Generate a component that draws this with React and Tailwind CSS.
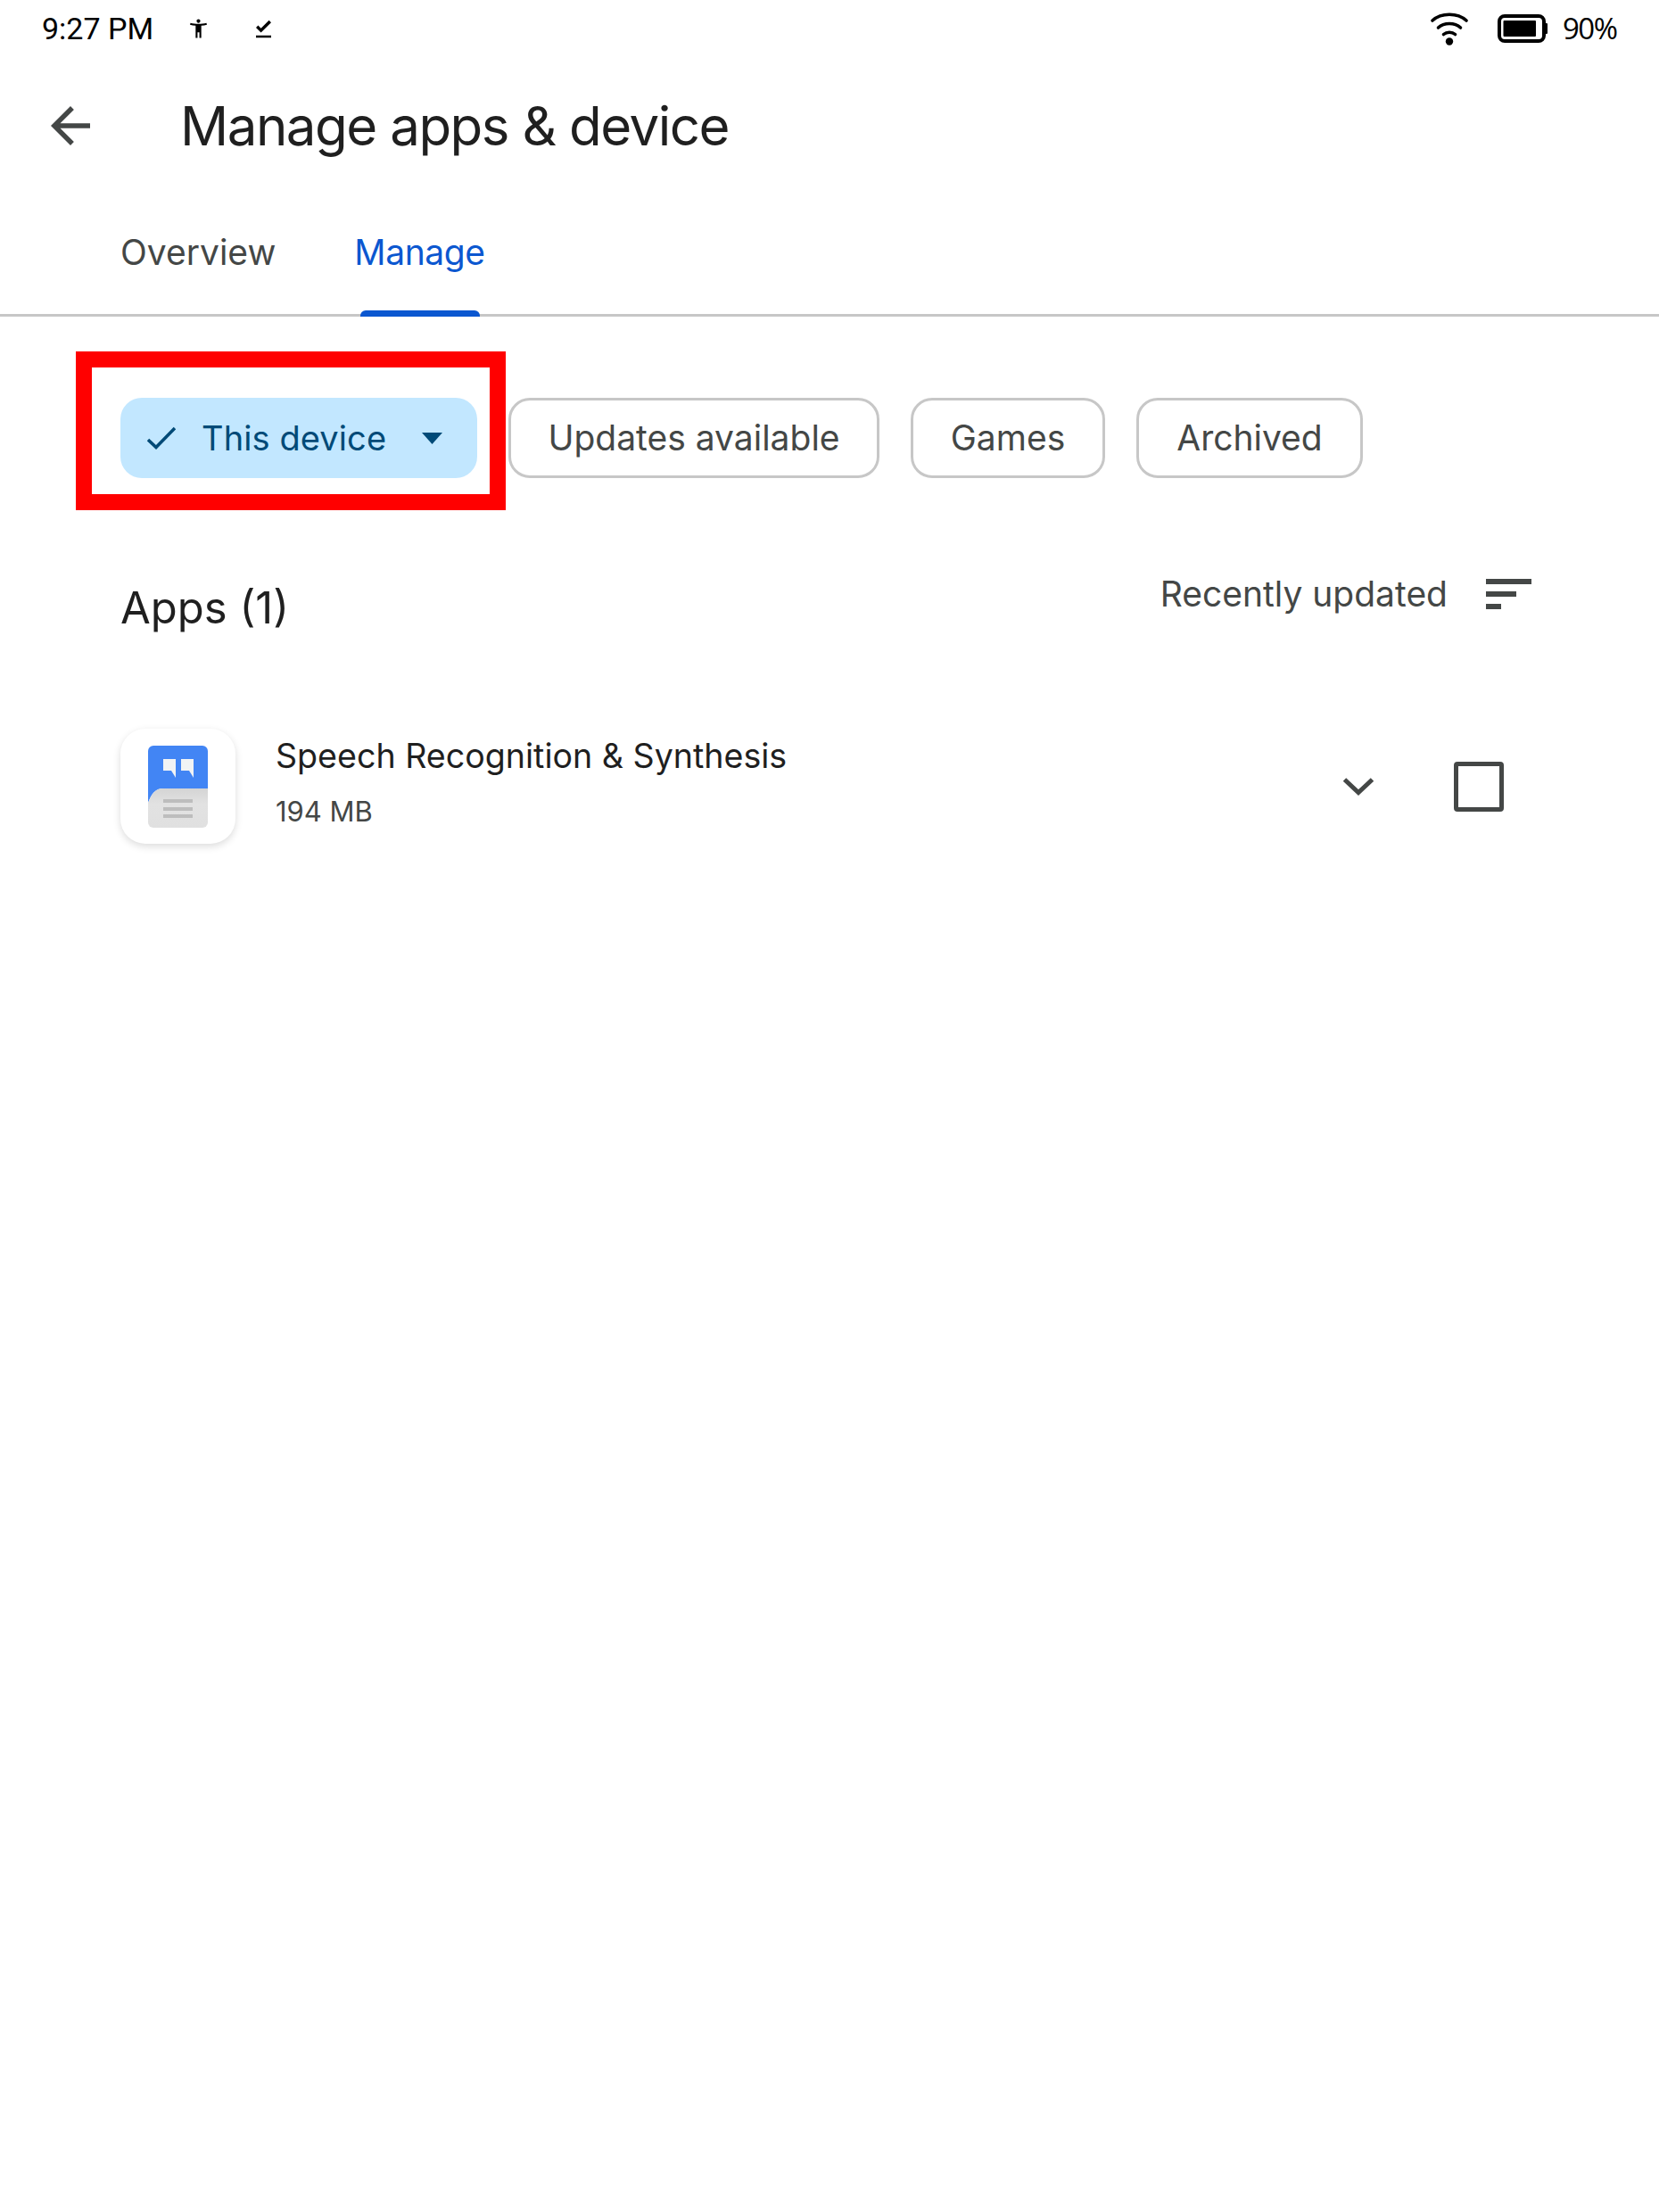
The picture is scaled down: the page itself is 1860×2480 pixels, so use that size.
export default function App() {
  const chip = "flex h-[90px] items-center justify-center rounded-[24px] border-[3px] border-[#c7c7c7] text-[#444746] text-[39px]";
  return (
    <div className="w-[1860px] h-[2480px] overflow-hidden bg-white [font-family:Inter,sans-serif] text-[#1f1f1f]">
      {/* status bar */}
      <div className="flex h-[64px] items-center pl-[47px] pr-[47px] text-black">
        <span className="w-[125px] whitespace-nowrap text-[34px] [font-family:Roboto,sans-serif]">9:27 PM</span>
        <svg viewBox="3 2 18 20" className="ml-[41px] h-[22px] w-[19px] fill-black">
          <path d="M20.5 6c-2.61.7-5.67 1-8.5 1s-5.89-.3-8.5-1L3 8c1.86.5 4 .83 6 1v13h2v-6h2v6h2V9c2-.17 4.14-.5 6-1l-.5-2zM12 6c1.1 0 2-.9 2-2s-.9-2-2-2-2 .9-2 2 .9 2 2 2z" />
        </svg>
        <svg viewBox="5 4 14 16" className="ml-[55px] h-[23px] w-[17px] fill-black">
          <path d="M5 18h14v2H5v-2zm4.6-2.7L5 10.7l2-1.9 2.6 2.6L17 4l2 2-9.4 9.3z" />
        </svg>
        <svg viewBox="0 0 42 38" className="ml-auto h-[38px] w-[42px]" fill="none" stroke="black" strokeWidth="3.6" strokeLinecap="round">
          <path d="M2 10C12 1 30 1 40 10" />
          <path d="M8.5 18C15 12 27 12 33.5 18" />
          <path d="M14.5 25.5C18 22.5 24 22.5 27.5 25.5" />
          <circle cx="21" cy="33.5" r="4.2" fill="black" stroke="none" />
        </svg>
        <svg viewBox="0 0 56 32" className="ml-[33px] h-[32px] w-[56px]">
          <rect x="2" y="2" width="50" height="28" rx="6" fill="none" stroke="black" strokeWidth="4" />
          <rect x="6.5" y="7" width="36.5" height="18" rx="1" fill="black" />
          <rect x="52" y="10" width="4" height="12" rx="1" fill="black" />
        </svg>
        <span className="ml-[17px] w-[61px] whitespace-nowrap text-[33px] [font-family:'Open_Sans',sans-serif] tracking-[-1.5px]">90%</span>
      </div>

      {/* header */}
      <div className="flex h-[154px] items-center pl-[57px]">
        <svg viewBox="4 4 16 16" className="h-[44px] w-[44px] fill-[#444746]">
          <path d="M20 11H7.83l5.59-5.59L12 4l-8 8 8 8 1.41-1.41L7.83 13H20v-2z" />
        </svg>
        <h1 className="ml-[101px] whitespace-nowrap text-[60px] font-normal tracking-[-1.5px]">Manage apps &amp; device</h1>
      </div>

      {/* tabs */}
      <div className="mt-[2px] flex h-[135px] gap-[92px] border-b-[3px] border-[#c7c7c7] pl-[135px]">
        <div className="flex h-[132px] w-[172px] items-start pt-[40px] text-[39px] leading-[46px] text-[#444746] whitespace-nowrap">Overview</div>
        <div className="flex h-[135px] w-[143px] flex-col items-center justify-between pt-[40px] text-[39px] leading-[46px] tracking-[-0.4px] text-[#0b57d0] whitespace-nowrap">
          <span>Manage</span>
          <div className="h-[7px] w-[134px] rounded-t-[6px] bg-[#0b57d0]" />
        </div>
      </div>

      {/* filter chips */}
      <div className="flex gap-[35px] pl-[135px] pt-[91px]">
        <div className="relative flex h-[90px] w-[400px] items-center rounded-[24px] bg-[#c2e7ff] pl-[30px] text-[38px] tracking-[0.1px] text-[#004a77]">
          <svg viewBox="0 0 32 26" className="h-[26px] w-[32px]" fill="none" stroke="#004a77" strokeWidth="3.6">
            <path d="M1 15L10 23.5L31 2" />
          </svg>
          <span className="ml-[29px] whitespace-nowrap">This device</span>
          <svg viewBox="0 0 23 13" className="absolute left-[338px] top-[39px] h-[13px] w-[23px] fill-[#004a77]">
            <path d="M0 0H23L11.5 13Z" />
          </svg>
          <div className="pointer-events-none absolute left-[-50px] right-[-32px] top-[-52px] bottom-[-36px] border-[18px] border-[#ff0000]" />
        </div>
        <div className={`${chip} w-[416px]`}>Updates available</div>
        <div className={`${chip} w-[218px]`}>Games</div>
        <div className={`${chip} w-[254px]`}>Archived</div>
      </div>

      {/* section header */}
      <div className="mt-[94px] flex items-start justify-between pl-[135px] pr-[143px]">
        <h2 className="text-[49px] font-normal leading-[104px] whitespace-nowrap">Apps (1)</h2>
        <div className="flex h-[72px] items-center gap-[43px] text-[39px] text-[#444746]">
          <span className="whitespace-nowrap">Recently updated</span>
          <div className="flex w-[51px] flex-col gap-[8px]">
            <div className="h-[6px] w-[51px] bg-[#444746]" />
            <div className="h-[6px] w-[34px] bg-[#444746]" />
            <div className="h-[6px] w-[17px] bg-[#444746]" />
          </div>
        </div>
      </div>

      {/* app row */}
      <div className="mt-[83px] flex items-start pl-[135px] pr-[174px]">
        <div className="flex h-[129px] w-[129px] shrink-0 items-center justify-center rounded-[28px] bg-white shadow-[0_3px_8px_rgba(0,0,0,0.14)]">
          <svg viewBox="0 0 67 92" className="mr-[1px] h-[92px] w-[67px]">
            <defs>
              <linearGradient id="paper" x1="0" y1="0" x2="0" y2="1">
                <stop offset="0" stopColor="#d4d4d4" />
                <stop offset="0.4" stopColor="#e2e2e2" />
                <stop offset="1" stopColor="#e0e0e0" />
              </linearGradient>
            </defs>
            <path d="M0 64V6a6 6 0 0 1 6-6H61a6 6 0 0 1 6 6V48H17C8 48 4 54 0 64Z" fill="#4285f4" />
            <path d="M0 64C4 54 8 48 17 48H67V86a6 6 0 0 1-6 6H6a6 6 0 0 1-6-6Z" fill="url(#paper)" />
            <path d="M17 15H31V36L26 28H17Z" fill="#f1f3f4" />
            <path d="M37 15H51V36L46 28H37Z" fill="#f1f3f4" />
            <rect x="17" y="60" width="33" height="4" fill="#bdbdbd" />
            <rect x="17" y="69" width="33" height="4" fill="#bdbdbd" />
            <rect x="17" y="77" width="33" height="4" fill="#bdbdbd" />
          </svg>
        </div>
        <div className="ml-[45px] flex flex-col">
          <span className="whitespace-nowrap text-[37.6px] leading-[61px]">Speech Recognition &amp; Synthesis</span>
          <span className="mt-[1px] whitespace-nowrap text-[31px] leading-[61px] text-[#444746]">194 MB</span>
        </div>
        <div className="ml-auto flex h-[129px] items-center gap-[90px]">
          <svg viewBox="0 0 34 20" className="h-[20px] w-[34px]" fill="none" stroke="#444746" strokeWidth="5">
            <path d="M1.5 2L17 16.5L32.5 2" />
          </svg>
          <div className="h-[56px] w-[56px] rounded-[4px] border-[5px] border-[#444746]" />
        </div>
      </div>
    </div>
  );
}
